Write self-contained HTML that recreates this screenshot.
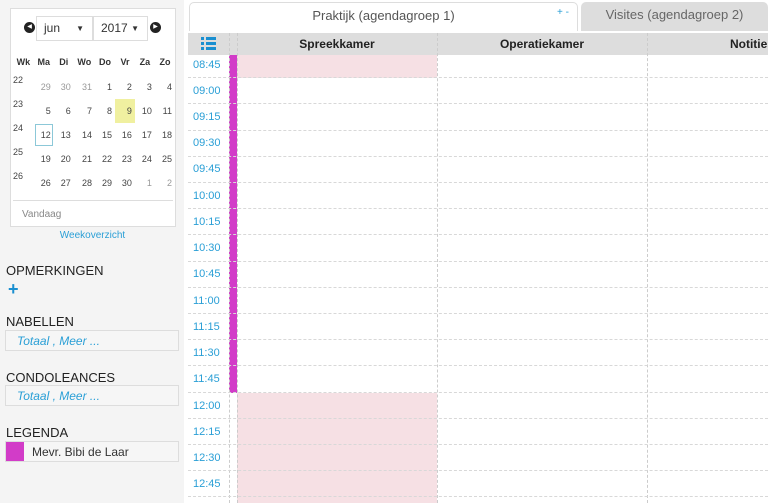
<!DOCTYPE html>
<html><head><style>
*{box-sizing:border-box;margin:0;padding:0}
body{width:768px;height:503px;overflow:hidden;background:#fff;font-family:"Liberation Sans",Arial,sans-serif;position:relative}
#side{position:absolute;left:0;top:0;width:184px;height:503px;background:#f4f4f4}
.cal{position:absolute;left:10px;top:8px;width:166px;height:219px;background:#fff;border:1px solid #ddd}
.sel{position:absolute;top:7px;height:25px;border:1px solid #ddd;font-size:12px;color:#333;line-height:23px;padding-left:7px}
.arr{position:absolute;top:13px;width:11px;height:11px;border-radius:50%;background:#222;color:#fff;font-size:6px;line-height:11px;text-align:center}
table{border-collapse:collapse}
.ct{position:absolute;left:2px;top:40px;width:162px;font-size:9px}
.ct td{height:24px;text-align:right;padding-right:3px;color:#444}
.ct th{height:26px;font-size:9px;color:#333}
.g{color:#999 !important}
.h{font-size:13px;color:#222;position:absolute;left:6px}
.box{position:absolute;left:5px;width:174px;height:21px;border:1px solid #ddd;background:#f6f6f6;font-size:12px;font-style:italic;color:#2a9fd6;padding:3px 0 0 11px}
.tab{position:absolute;top:2px;height:29px;border-radius:5px 5px 0 0;font-size:13px;line-height:26px;text-align:center}
.row{position:absolute;left:188px;width:580px;height:26.2px;border-bottom:1px dashed #d8d8d8}
.t{position:absolute;left:193px;font-size:11px;color:#2a9fd6}
.vl{position:absolute;top:33px;bottom:0;border-left:1px dashed #ccc}
</style></head><body>
<div id="side">
<div class="cal">
<div class="arr" style="left:13px">◀</div>
<div class="sel" style="left:25px;width:57px">jun<span style="position:absolute;right:8px;font-size:8px">▼</span></div>
<div class="sel" style="left:82px;width:55px">2017<span style="position:absolute;right:8px;font-size:8px">▼</span></div>
<div class="arr" style="left:139px">▶</div>
<table class="ct">
<tr><th>Wk</th><th>Ma</th><th>Di</th><th>Wo</th><th>Do</th><th>Vr</th><th>Za</th><th>Zo</th></tr>
<tr><td style="text-align:left;vertical-align:top">22</td><td class="g">29</td><td class="g">30</td><td class="g">31</td><td>1</td><td>2</td><td>3</td><td>4</td></tr>
<tr><td style="text-align:left;vertical-align:top">23</td><td>5</td><td>6</td><td>7</td><td>8</td><td style="background:#f0f0a0">9</td><td>10</td><td>11</td></tr>
<tr><td style="text-align:left;vertical-align:top">24</td><td style="outline:1px solid #8cc8d8;outline-offset:-2px">12</td><td>13</td><td>14</td><td>15</td><td>16</td><td>17</td><td>18</td></tr>
<tr><td style="text-align:left;vertical-align:top">25</td><td>19</td><td>20</td><td>21</td><td>22</td><td>23</td><td>24</td><td>25</td></tr>
<tr><td style="text-align:left;vertical-align:top">26</td><td>26</td><td>27</td><td>28</td><td>29</td><td>30</td><td class="g">1</td><td class="g">2</td></tr>
</table>
<div style="position:absolute;left:2px;right:2px;top:191px;border-top:1px solid #ddd"></div>
<div style="position:absolute;left:11px;top:200px;font-size:10px;color:#888">Vandaag</div>
</div>
<div style="position:absolute;left:0;width:185px;top:230px;text-align:center;font-size:10px;color:#2a9fd6">Weekoverzicht</div>
<div class="h" style="top:263px">OPMERKINGEN</div>
<div style="position:absolute;left:8px;top:279px;font-size:18px;font-weight:bold;color:#1a8fd0">+</div>
<div class="h" style="top:314px">NABELLEN</div>
<div class="box" style="top:330px">Totaal , Meer ...</div>
<div class="h" style="top:370px">CONDOLEANCES</div>
<div class="box" style="top:385px">Totaal , Meer ...</div>
<div class="h" style="top:425px">LEGENDA</div>
<div class="box" style="top:441px;font-style:normal;color:#333;padding-left:26px">Mevr. Bibi de Laar</div>
<div style="position:absolute;left:6px;top:442px;width:18px;height:19px;background:#d23cc8"></div>
</div>
<div class="tab" style="left:189px;width:389px;border:1px solid #ddd;border-bottom:none;color:#555">Praktijk (agendagroep 1)<span style="position:absolute;right:8px;top:0;font-size:10px;color:#2a9fd6;line-height:20px">+ -</span></div>
<div class="tab" style="left:581px;width:187px;background:#ddd;color:#666">Visites (agendagroep 2)</div>
<div style="position:absolute;left:188px;top:33px;width:580px;height:22px;background:#ddd;font-size:12px;font-weight:bold;color:#222;line-height:22px">
<div style="position:absolute;left:49px;width:200px;text-align:center">Spreekkamer</div>
<div style="position:absolute;left:249px;width:210px;text-align:center">Operatiekamer</div>
<div style="position:absolute;left:459px;width:210px;text-align:center">Notities</div>
<div style="position:absolute;left:13px;top:4px;width:15px;height:13px">
<div style="position:absolute;left:0;top:0;width:3px;height:3px;background:#1a8fd0"></div><div style="position:absolute;left:5px;top:0;width:10px;height:3px;background:#1a8fd0"></div>
<div style="position:absolute;left:0;top:5px;width:3px;height:3px;background:#1a8fd0"></div><div style="position:absolute;left:5px;top:5px;width:10px;height:3px;background:#1a8fd0"></div>
<div style="position:absolute;left:0;top:10px;width:3px;height:3px;background:#1a8fd0"></div><div style="position:absolute;left:5px;top:10px;width:10px;height:3px;background:#1a8fd0"></div>
</div>
</div>
<div style="position:absolute;left:237px;top:55px;width:200px;height:23px;background:#f6e0e4"></div>
<div style="position:absolute;left:237px;top:393px;width:200px;height:110px;background:#f6e0e4"></div>
<div style="position:absolute;left:229px;top:55px;width:8px;height:338px;background:#d23cc8"></div>
<div class="vl" style="left:229px"></div><div class="vl" style="left:237px"></div><div class="vl" style="left:437px"></div><div class="vl" style="left:647px"></div>
<div class="row" style="top:52px"></div><div class="t" style="top:59px">08:45</div>
<div class="row" style="top:78.2px"></div><div class="t" style="top:85px">09:00</div>
<div class="row" style="top:104.4px"></div><div class="t" style="top:111px">09:15</div>
<div class="row" style="top:130.6px"></div><div class="t" style="top:137px">09:30</div>
<div class="row" style="top:156.8px"></div><div class="t" style="top:163px">09:45</div>
<div class="row" style="top:183px"></div><div class="t" style="top:190px">10:00</div>
<div class="row" style="top:209.2px"></div><div class="t" style="top:216px">10:15</div>
<div class="row" style="top:235.4px"></div><div class="t" style="top:242px">10:30</div>
<div class="row" style="top:261.6px"></div><div class="t" style="top:268px">10:45</div>
<div class="row" style="top:287.8px"></div><div class="t" style="top:295px">11:00</div>
<div class="row" style="top:314px"></div><div class="t" style="top:321px">11:15</div>
<div class="row" style="top:340.2px"></div><div class="t" style="top:347px">11:30</div>
<div class="row" style="top:366.4px"></div><div class="t" style="top:373px">11:45</div>
<div class="row" style="top:392.6px"></div><div class="t" style="top:400px">12:00</div>
<div class="row" style="top:418.8px"></div><div class="t" style="top:426px">12:15</div>
<div class="row" style="top:445px"></div><div class="t" style="top:452px">12:30</div>
<div class="row" style="top:471.2px"></div><div class="t" style="top:478px">12:45</div>
</body></html>
